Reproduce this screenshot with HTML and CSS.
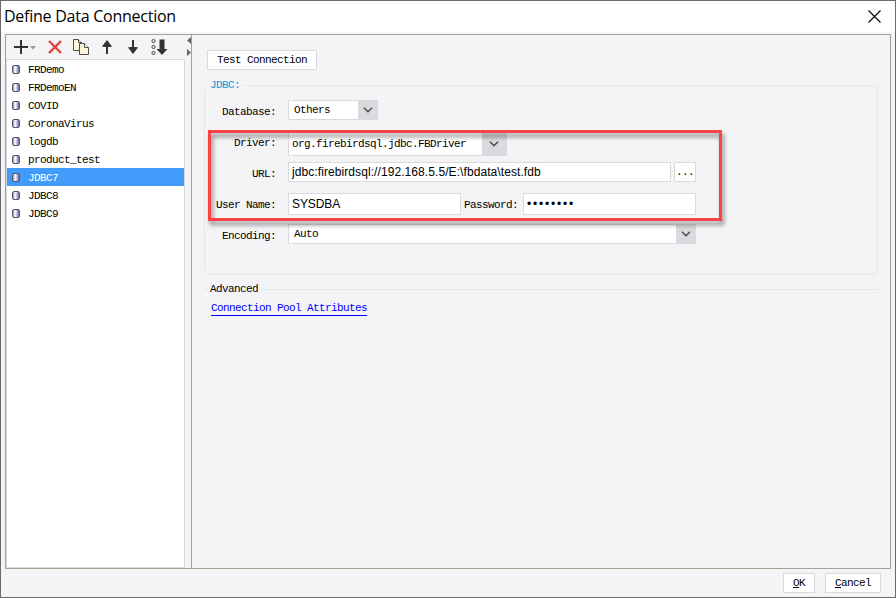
FILE: index.html
```html
<!DOCTYPE html>
<html lang="en">
<head>
    <meta charset="UTF-8">
    <title>Define Data Connection</title>
    <link rel="stylesheet" href="styles.css">
</head>
<body>
    <div class="dialog">
        <div class="titlebar">
            <span class="title">Define Data Connection</span>
            <svg class="close" width="13" height="13" viewBox="0 0 13 13"><path d="M.5 .5l12 12M12.5 .5l-12 12" stroke="#000" stroke-width="1.1"/></svg>
        </div>

        <div class="main">
            <div class="sidebar">
                <div class="toolbar">
                    <svg width="24" height="18" viewBox="0 0 24 18"><path d="M8 2v14M1 9h14" stroke="#333" stroke-width="2"/><path d="M17 8h6l-3 3.500z" fill="#999"/></svg>
                    <svg width="14" height="14" viewBox="0 0 14 14"><path d="M1 1l12 12M13 1L1 13" stroke="#e8403a" stroke-width="2.400"/></svg>
                    <svg width="18" height="18" viewBox="0 0 18 18"><path d="M1.500 1.500h5l3 3v8h-8z" fill="#fff4dc" stroke="#4d4d4d"/><path d="M6.500 1.500v3h3" fill="#fff" stroke="#4d4d4d"/><path d="M7.500 5.500h5l4 4v7h-9z" fill="#fff4dc" stroke="#4d4d4d"/><path d="M12.500 5.500v4h4" fill="#fff" stroke="#4d4d4d"/></svg>
                    <svg width="12" height="16" viewBox="0 0 12 16"><path d="M6 4v11" stroke="#333" stroke-width="2"/><path d="M6 1L1 7.500l2 .5h6l2-.5z" fill="#333"/></svg>
                    <svg width="12" height="16" viewBox="0 0 12 16"><path d="M6 1v11" stroke="#333" stroke-width="2"/><path d="M6 15L1 8.500L3 8h6l2 .5z" fill="#333"/></svg>
                    <svg width="17" height="18" viewBox="0 0 17 18"><g fill="none" stroke="#444"><circle cx="2.500" cy="3" r="1.600"/><circle cx="2.500" cy="9" r="1.600"/><circle cx="2.500" cy="15" r="1.600"/></g><path d="M8.500 1.500h5V11h3L11 17 5.500 11h3z" fill="#333"/></svg>
                </div>
                <ul class="list">
                    <li><i class="db"></i>FRDemo</li>
                    <li><i class="db"></i>FRDemoEN</li>
                    <li><i class="db"></i>COVID</li>
                    <li><i class="db"></i>CoronaVirus</li>
                    <li><i class="db"></i>logdb</li>
                    <li><i class="db"></i>product_test</li>
                    <li class="selected"><i class="db"></i>JDBC7</li>
                    <li><i class="db"></i>JDBC8</li>
                    <li><i class="db"></i>JDBC9</li>
                </ul>
            </div>

            <div class="splitter">
                <svg width="4" height="19" viewBox="0 0 4 19"><path d="M4 0v7L0 3.500zM0 12v7l4-3.500z" fill="#666"/></svg>
            </div>

            <div class="content">
                <button class="btn test">Test Connection</button>

                <div class="group">
                    <div class="group-title">JDBC:</div>
                    <div class="row">
                        <label>Database:</label>
                        <div class="select database"><span>Others</span><b><svg width="10" height="6" viewBox="0 0 10 6"><path d="M1 .8l4 4 4-4" fill="none" stroke="#444" stroke-width="1.300"/></svg></b></div>
                    </div>
                    <div class="row">
                        <label>Driver:</label>
                        <div class="select driver"><span>org.firebirdsql.jdbc.FBDriver</span><b><svg width="10" height="6" viewBox="0 0 10 6"><path d="M1 .8l4 4 4-4" fill="none" stroke="#444" stroke-width="1.300"/></svg></b></div>
                    </div>
                    <div class="row">
                        <label>URL:</label>
                        <div class="input url">jdbc:firebirdsql://192.168.5.5/E:\fbdata\test.fdb</div>
                        <button class="btn more">...</button>
                    </div>
                    <div class="row">
                        <label>User Name:</label>
                        <div class="input user">SYSDBA</div>
                        <label class="password-label">Password:</label>
                        <div class="input password">••••••••</div>
                    </div>
                    <div class="row">
                        <label>Encoding:</label>
                        <div class="select encoding"><span>Auto</span><b><svg width="10" height="6" viewBox="0 0 10 6"><path d="M1 .8l4 4 4-4" fill="none" stroke="#444" stroke-width="1.300"/></svg></b></div>
                    </div>
                    <div class="highlight"></div>
                </div>

                <div class="advanced">Advanced</div>
                <a class="link">Connection Pool Attributes</a>
            </div>
        </div>

        <div class="footer">
            <button class="btn ok"><u>O</u>K</button>
            <button class="btn cancel"><u>C</u>ancel</button>
        </div>
    </div>
</body>
</html>
```

FILE: styles.css
```css
* {
    box-sizing: border-box;
}
body {
    margin: 0;
    font-family: "Liberation Mono", monospace;
    font-size: 11px;
    letter-spacing: -0.6px;
    color: #000;
}
svg {
    display: block;
    flex: none;
}
.dialog {
    width: 896px;
    height: 598px;
    border: 1px solid #6b696b;
    background: #f4f4f7;
    overflow: hidden;
}
.titlebar {
    display: flex;
    justify-content: space-between;
    height: 31px;
    padding: 0 14px 0 3px;
    background: #fff;
}
.title {
    font: 16px/31px "Open Sans", "Noto Sans", sans-serif;
    letter-spacing: -0.25px;
}
.close {
    margin-top: 9px;
}
.main {
    display: flex;
    width: 886px;
    height: 535px;
    margin: 2px 0 0 4px;
    border: 1px solid #a3a395;
}
.sidebar {
    width: 179px;
}
.toolbar {
    display: flex;
    align-items: center;
    height: 24px;
    padding-left: 7px;
}
.toolbar svg:nth-child(2) {
    margin-left: 11px;
}
.toolbar svg:nth-child(3) {
    margin-left: 10px;
}
.toolbar svg:nth-child(4) {
    margin-left: 11px;
}
.toolbar svg:nth-child(5) {
    margin-left: 14px;
}
.toolbar svg:nth-child(6) {
    margin-left: 12px;
}
.list {
    height: 509px;
    margin: 0;
    padding: 0;
    list-style: none;
    background: #fff;
    border: 1px solid #d9dadd;
}
.list li {
    display: flex;
    align-items: center;
    height: 18px;
    padding: 1px 0 0 5px;
}
.list .selected {
    background: #419bf9;
    color: #fff;
}
/* small cylinder in front of each connection */
.db {
    width: 8px;
    height: 9px;
    margin-right: 8px;
    border: 1px solid #55556f;
    border-radius: 2px;
    background: linear-gradient(to right, #9a9ac0, #fff 40%, #c6c8e6 60%, #66668a);
}
.splitter {
    width: 7px;
    padding: 2px 0 0 2px;
    border-right: 1px solid #a2a2a6;
}
.content {
    flex: 1;
    padding: 15px 12px 0;
}
.btn {
    height: 20px;
    padding: 0;
    font: inherit;
    letter-spacing: inherit;
    color: #000;
    background: #fff;
    border: 1px solid #d9dadd;
}
.test {
    display: block;
    width: 110px;
    margin-left: 3px;
}
.group {
    position: relative;
    height: 190px;
    margin-top: 15px;
    border: 1px solid #e6e6ea;
    border-radius: 6px;
}
.group-title {
    width: 36px;
    height: 14px;
    margin: -8px 0 5px 3px;
    padding-left: 2px;
    line-height: 14px;
    color: #0f93d2;
    background: #f4f4f7;
}
.row {
    display: flex;
    height: 31px;
}
.row label {
    width: 71px;
    margin-right: 12px;
    line-height: 31px;
    text-align: right;
    white-space: nowrap;
}
.select {
    display: flex;
    height: 20px;
    margin-top: 3px;
    background: #fff;
    border: 1px solid #d9dadd;
}
.select span {
    flex: 1;
    padding-left: 5px;
    line-height: 19px;
}
.select b {
    display: flex;
    align-items: center;
    justify-content: center;
    width: 19px;
    background: #d9dadd;
}
.database {
    width: 90px;
}
.driver {
    width: 219px;
    height: 24px;
    margin-top: 4px;
}
.driver span {
    padding-left: 3px;
    line-height: 22px;
}
.driver b {
    width: 24px;
}
.encoding {
    width: 408px;
}
.input {
    height: 20px;
    margin-top: 3px;
    padding-left: 3px;
    font: 12px/18px "Liberation Sans", Arial, sans-serif;
    letter-spacing: 0;
    background: #fff;
    border: 1px solid #d9dadd;
}
.url {
    width: 383px;
    letter-spacing: 0.08px;
}
.more {
    width: 22px;
    margin: 3px 0 0 3px;
}
.user {
    width: 173px;
    height: 22px;
    line-height: 20px;
    letter-spacing: -0.1px;
}
.row .password-label {
    width: 57px;
    margin-right: 5px;
}
.password {
    width: 173px;
    height: 22px;
    line-height: 20px;
    letter-spacing: 1.8px;
}
/* red frame over the connection settings */
.highlight {
    position: absolute;
    left: 3px;
    top: 44px;
    width: 514px;
    height: 91px;
    border: 3px solid #fc4242;
    filter: drop-shadow(2px 4px 2px rgba(0, 0, 0, 0.45));
}
.advanced {
    display: flex;
    align-items: center;
    height: 14px;
    margin-top: 7px;
}
.advanced::before,
.advanced::after {
    content: "";
    width: 4px;
    height: 1px;
    margin-right: 2px;
    background: #e6e6ea;
}
.advanced::after {
    flex: 1;
    margin: 0 0 0 2px;
}
.link {
    display: inline-block;
    height: 14px;
    margin: 6px 0 0 7px;
    line-height: 13px;
    color: #00f;
    border-bottom: 1px solid #00f;
}
.footer {
    display: flex;
    justify-content: flex-end;
    gap: 10px;
    padding: 4px 14px 0 0;
}
.ok {
    width: 32px;
}
.cancel {
    width: 56px;
}
```
